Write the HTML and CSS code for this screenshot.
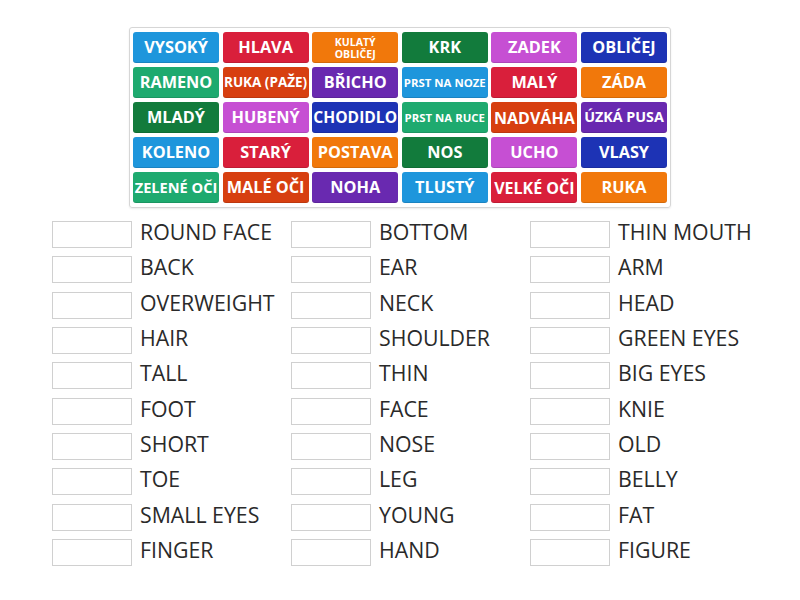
FILE: index.html
```html
<!DOCTYPE html>
<html lang="cs">
<head>
<meta charset="utf-8">
<title>Match up</title>
<link rel="stylesheet" href="styles.css">
</head>
<body>
<div class="board">
  <div class="tile c1">VYSOKÝ</div>
  <div class="tile c2">HLAVA</div>
  <div class="tile c3 two">KULATÝ<br>OBLIČEJ</div>
  <div class="tile c4">KRK</div>
  <div class="tile c5">ZADEK</div>
  <div class="tile c6">OBLIČEJ</div>

  <div class="tile c7">RAMENO</div>
  <div class="tile c8 f13">RUKA (PAŽE)</div>
  <div class="tile c9">BŘICHO</div>
  <div class="tile c1 f11">PRST NA NOZE</div>
  <div class="tile c2">MALÝ</div>
  <div class="tile c3">ZÁDA</div>

  <div class="tile c4">MLADÝ</div>
  <div class="tile c5">HUBENÝ</div>
  <div class="tile c6 f15">CHODIDLO</div>
  <div class="tile c7 f11">PRST NA RUCE</div>
  <div class="tile c8 f16">NADVÁHA</div>
  <div class="tile c9 f14">ÚZKÁ PUSA</div>

  <div class="tile c1">KOLENO</div>
  <div class="tile c2">STARÝ</div>
  <div class="tile c3">POSTAVA</div>
  <div class="tile c4">NOS</div>
  <div class="tile c5">UCHO</div>
  <div class="tile c6">VLASY</div>

  <div class="tile c7 f145">ZELENÉ OČI</div>
  <div class="tile c8">MALÉ OČI</div>
  <div class="tile c9">NOHA</div>
  <div class="tile c1">TLUSTÝ</div>
  <div class="tile c2 f16">VELKÉ OČI</div>
  <div class="tile c3">RUKA</div>
</div>

<div class="answers">
  <div class="item"><span class="box"></span><span class="label">ROUND FACE</span></div>
  <div class="item"><span class="box"></span><span class="label">BOTTOM</span></div>
  <div class="item"><span class="box"></span><span class="label">THIN MOUTH</span></div>

  <div class="item"><span class="box"></span><span class="label">BACK</span></div>
  <div class="item"><span class="box"></span><span class="label">EAR</span></div>
  <div class="item"><span class="box"></span><span class="label">ARM</span></div>

  <div class="item"><span class="box"></span><span class="label">OVERWEIGHT</span></div>
  <div class="item"><span class="box"></span><span class="label">NECK</span></div>
  <div class="item"><span class="box"></span><span class="label">HEAD</span></div>

  <div class="item"><span class="box"></span><span class="label">HAIR</span></div>
  <div class="item"><span class="box"></span><span class="label">SHOULDER</span></div>
  <div class="item"><span class="box"></span><span class="label">GREEN EYES</span></div>

  <div class="item"><span class="box"></span><span class="label">TALL</span></div>
  <div class="item"><span class="box"></span><span class="label">THIN</span></div>
  <div class="item"><span class="box"></span><span class="label">BIG EYES</span></div>

  <div class="item"><span class="box"></span><span class="label">FOOT</span></div>
  <div class="item"><span class="box"></span><span class="label">FACE</span></div>
  <div class="item"><span class="box"></span><span class="label">KNIE</span></div>

  <div class="item"><span class="box"></span><span class="label">SHORT</span></div>
  <div class="item"><span class="box"></span><span class="label">NOSE</span></div>
  <div class="item"><span class="box"></span><span class="label">OLD</span></div>

  <div class="item"><span class="box"></span><span class="label">TOE</span></div>
  <div class="item"><span class="box"></span><span class="label">LEG</span></div>
  <div class="item"><span class="box"></span><span class="label">BELLY</span></div>

  <div class="item"><span class="box"></span><span class="label">SMALL EYES</span></div>
  <div class="item"><span class="box"></span><span class="label">YOUNG</span></div>
  <div class="item"><span class="box"></span><span class="label">FAT</span></div>

  <div class="item"><span class="box"></span><span class="label">FINGER</span></div>
  <div class="item"><span class="box"></span><span class="label">HAND</span></div>
  <div class="item"><span class="box"></span><span class="label">FIGURE</span></div>
</div>
</body>
</html>
```
FILE: styles.css
```css
html, body {
  margin: 0;
  padding: 0;
  background: #ffffff;
}

body {
  font-family: "Open Sans", "DejaVu Sans", sans-serif;
  width: 800px;
  height: 600px;
  overflow: hidden;
}

.board {
  box-sizing: border-box;
  width: 542px;
  margin: 27px 0 0 129px;
  padding: 4px 3px 4px 3px;
  border: 1px solid #d6d6d6;
  border-radius: 3px;
  box-shadow: 0 1px 2px rgba(0, 0, 0, 0.08);
  display: grid;
  grid-template-columns: repeat(6, 86px);
  grid-auto-rows: 31px;
  column-gap: 3.6px;
  row-gap: 4px;
}

.tile {
  display: flex;
  align-items: center;
  justify-content: center;
  text-align: center;
  color: #ffffff;
  font-weight: 700;
  font-size: 16.3px;
  line-height: 1;
  border-radius: 3px;
  white-space: nowrap;
  overflow: hidden;
  box-shadow: inset 0 -1px 0 rgba(0, 0, 0, 0.12);
}

.tile.two {
  font-size: 10.5px;
  line-height: 12.5px;
  padding-top: 1px;
}

.f16 { font-size: 16px; }
.f15 { font-size: 15.6px; }
.f145 { font-size: 14.6px; }
.f14 { font-size: 14.3px; }
.f13 { font-size: 13.5px; }
.f11 { font-size: 11.4px; }

.c1 { background: #1e96dc; }
.c2 { background: #d91f3b; }
.c3 { background: #f1780b; }
.c4 { background: #127b3c; }
.c5 { background: #c64fd3; }
.c6 { background: #1d33b5; }
.c7 { background: #1eaa6f; }
.c8 { background: #d73f10; }
.c9 { background: #6929b0; }

.answers {
  margin-top: 13px;
  padding-left: 52px;
  display: grid;
  grid-template-columns: repeat(3, 239px);
  grid-auto-rows: 27px;
  row-gap: 8.33px;
}

.item {
  display: flex;
  align-items: flex-start;
  gap: 8px;
}

.box {
  box-sizing: border-box;
  width: 80px;
  height: 27px;
  border: 1px solid #d0d0d0;
  flex: none;
}

.label {
  font-size: 21.3px;
  line-height: 22px;
  color: #2a2a2a;
  white-space: nowrap;
}
```
